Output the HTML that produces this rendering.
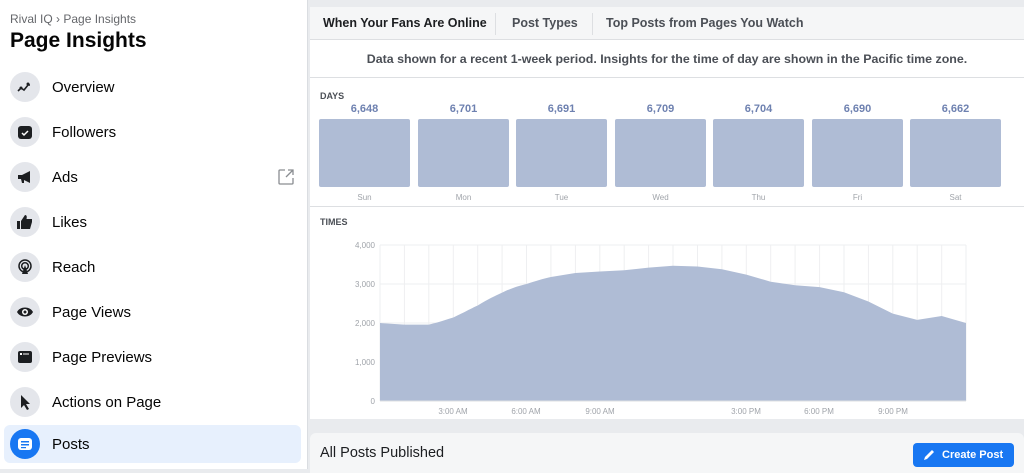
<!DOCTYPE html>
<html><head><meta charset="utf-8"><style>
*{margin:0;padding:0;box-sizing:border-box}
body{width:1024px;height:469px;overflow:hidden;font-family:"Liberation Sans",sans-serif;background:#e9ebee;position:relative}
.side{position:absolute;left:0;top:0;width:308px;height:469px;background:#fff;border-right:1px solid #dadde1}
.crumb{position:absolute;left:10px;top:12px;font-size:12px;color:#65676b}
.title{position:absolute;left:10px;top:29px;font-size:21px;font-weight:bold;color:#050505}
.item{position:absolute;left:4px;width:297px;height:38px;border-radius:6px}
.item .ic{position:absolute;left:6px;top:4px;width:30px;height:30px;border-radius:50%;background:#e4e6eb}
.item .ic svg{position:absolute;left:7px;top:7px}
.item span{position:absolute;left:48px;top:11px;font-size:15px;color:#050505}
.panel{position:absolute;left:310px;top:7px;width:714px;height:412px;background:#fff}
.tabs{height:33px;background:#f5f6f7;border-bottom:1px solid #dddfe2;font-size:12.5px;font-weight:bold;color:#4b4f56;position:relative}
.tabs span{position:absolute;top:9px}
.tabs i{position:absolute;top:6px;width:1px;height:22px;background:#dddfe2}
.desc{height:38px;border-bottom:1px solid #dddfe2;text-align:center;font-size:12.4px;font-weight:bold;color:#4b4f56;line-height:38px}
.lbl{position:absolute;font-size:9px;font-weight:bold;color:#4b4f56}
.bar{position:absolute;top:112px;width:91px;height:68px;background:#afbcd5;border-radius:2px}
.num{position:absolute;top:96px;width:91px;text-align:center;font-size:11px;font-weight:bold;color:#6e81b0}
.day{position:absolute;top:186px;width:91px;text-align:center;font-size:8px;color:#a0a4aa}
.card{position:absolute;left:310px;top:433px;width:714px;height:40px;background:#f5f6f7;border-radius:6px 6px 0 0}
.card .t{position:absolute;left:10px;top:12px;font-size:14.5px;color:#1c1e21}
.btn{position:absolute;left:603px;top:10px;width:101px;height:24px;background:#1877f2;border-radius:4px;color:#fff;font-size:11px;font-weight:bold;line-height:24px;padding-left:29px}
</style></head><body>
<div class="side">
<div class="crumb">Rival IQ › Page Insights</div>
<div class="title">Page Insights</div>
<div class="item" style="top:68px"><div class="ic"><svg width="16" height="16" viewBox="0 0 16 16"><path d="M1 12l3-3 3 2 4-5 2 0" stroke="#1c1e21" stroke-width="1.6" fill="none"/><circle cx="4" cy="9" r="1.5" fill="#1c1e21"/><circle cx="11" cy="5" r="1.5" fill="#1c1e21"/></svg></div><span>Overview</span></div>
<div class="item" style="top:113px"><div class="ic"><svg width="16" height="16" viewBox="0 0 16 16"><rect x="1" y="2" width="14" height="13" rx="3" fill="#1c1e21"/><path d="M5 9l2 2 4-4" stroke="#fff" stroke-width="1.5" fill="none"/></svg></div><span>Followers</span></div>
<div class="item" style="top:158px"><div class="ic"><svg width="16" height="16" viewBox="0 0 16 16"><path d="M1 6h4l8-4v12l-8-4H1zM4 10h3v4H5z" fill="#1c1e21"/></svg></div><span>Ads</span>
<svg style="position:absolute;left:273px;top:10px" width="18" height="18" viewBox="0 0 18 18"><path d="M8 2H3a1 1 0 0 0-1 1v12a1 1 0 0 0 1 1h12a1 1 0 0 0 1-1v-5M11 2h5v5M16 2l-7 7" stroke="#8a8d91" stroke-width="1.3" fill="none"/></svg></div>
<div class="item" style="top:203px"><div class="ic"><svg width="16" height="16" viewBox="0 0 16 16"><rect x="0" y="7" width="3" height="8" fill="#1c1e21"/><path d="M4 7l4-6c2 0 2 2 1.5 4H15v3l-2 7H4z" fill="#1c1e21"/></svg></div><span>Likes</span></div>
<div class="item" style="top:248px"><div class="ic"><svg width="16" height="16" viewBox="0 0 16 16"><circle cx="8" cy="7" r="6" stroke="#1c1e21" stroke-width="1.5" fill="none"/><circle cx="8" cy="7" r="3.3" stroke="#1c1e21" stroke-width="1.5" fill="none"/><path d="M8 6l3 9H5z" fill="#1c1e21"/></svg></div><span>Reach</span></div>
<div class="item" style="top:293px"><div class="ic"><svg width="16" height="16" viewBox="0 0 16 16"><path d="M0 8c3-6 13-6 16 0-3 6-13 6-16 0z" fill="#1c1e21"/><circle cx="8" cy="8" r="3" fill="#fff"/><circle cx="8" cy="8" r="1.5" fill="#1c1e21"/></svg></div><span>Page Views</span></div>
<div class="item" style="top:338px"><div class="ic"><svg width="16" height="16" viewBox="0 0 16 16"><rect x="1" y="2" width="14" height="12" rx="2" fill="#1c1e21"/><rect x="3" y="4" width="2" height="2" fill="#fff"/><rect x="6" y="4.5" width="6" height="1" fill="#fff"/></svg></div><span>Page Previews</span></div>
<div class="item" style="top:383px"><div class="ic"><svg width="16" height="16" viewBox="0 0 16 16"><path d="M4 1v13l3-3 3 5 2-1-3-5h4z" fill="#1c1e21"/></svg></div><span>Actions on Page</span></div>
<div class="item" style="top:425px;background:#e7f0fd"><div class="ic" style="background:#1877f2"><svg width="16" height="16" viewBox="0 0 16 16"><rect x="1" y="2" width="14" height="12" rx="3" fill="#fff"/><rect x="4" y="5" width="8" height="1.5" fill="#1877f2"/><rect x="4" y="8" width="8" height="1.5" fill="#1877f2"/><rect x="4" y="11" width="5" height="1.2" fill="#1877f2"/></svg></div><span>Posts</span></div>
</div>
<div class="panel">
<div class="tabs"><span style="left:13px;color:#1c1e21">When Your Fans Are Online</span><i style="left:185px"></i><span style="left:202px">Post Types</span><i style="left:282px"></i><span style="left:296px">Top Posts from Pages You Watch</span></div>
<div class="desc">Data shown for a recent 1-week period. Insights for the time of day are shown in the Pacific time zone.</div>
<div class="lbl" style="left:10px;top:84px">DAYS</div>
<div class="num" style="left:9px">6,648</div><div class="bar" style="left:9px"></div><div class="day" style="left:9px">Sun</div>
<div class="num" style="left:108px">6,701</div><div class="bar" style="left:108px"></div><div class="day" style="left:108px">Mon</div>
<div class="num" style="left:206px">6,691</div><div class="bar" style="left:206px"></div><div class="day" style="left:206px">Tue</div>
<div class="num" style="left:305px">6,709</div><div class="bar" style="left:305px"></div><div class="day" style="left:305px">Wed</div>
<div class="num" style="left:403px">6,704</div><div class="bar" style="left:403px"></div><div class="day" style="left:403px">Thu</div>
<div class="num" style="left:502px">6,690</div><div class="bar" style="left:502px"></div><div class="day" style="left:502px">Fri</div>
<div class="num" style="left:600px">6,662</div><div class="bar" style="left:600px"></div><div class="day" style="left:600px">Sat</div>
<div style="position:absolute;left:0;top:199px;width:714px;height:1px;background:#dddfe2"></div>
<div class="lbl" style="left:10px;top:210px">TIMES</div>
</div>
<svg style="position:absolute;left:0;top:0" width="1024" height="469" font-family="Liberation Sans, sans-serif">
<g stroke="#eeeff1" stroke-width="1">
<path d="M380 245H966M380 284H966M380 323H966M380 362H966"/>
<path d="M380 245V401M404.4 245V401M428.8 245V401M453.3 245V401M477.7 245V401M502.1 245V401M526.5 245V401M550.9 245V401M575.4 245V401M599.8 245V401M624.2 245V401M648.6 245V401M673 245V401M697.5 245V401M721.9 245V401M746.3 245V401M770.7 245V401M795.1 245V401M819.6 245V401M844 245V401M868.4 245V401M892.8 245V401M917.2 245V401M941.7 245V401M966 245V401"/>
</g>
<path d="M380 323L404.4 324.6L428.8 324.6C440 322 445 320 453.3 317.5C465 312 470 309 477.7 305.5C488 299 495 296 502.1 292.6C512 288 518 286 526.5 284C536 281 542 279 550.9 277L575.4 273L599.8 271.5L624.2 270.3L648.6 267.6L673 265.7L697.5 266.5L721.9 269.2L746.3 274.6L770.7 281.7L795.1 285.2L819.6 287.1L844 292.2L868.4 301.5L892.8 313.6L917.2 319.9L941.7 316L966 323V401H380Z" fill="#afbcd5"/>
<path d="M380 401H966" stroke="#dddfe2"/>
<g font-size="8" fill="#a0a4aa" text-anchor="end"><text x="375" y="248">4,000</text><text x="375" y="287">3,000</text><text x="375" y="326">2,000</text><text x="375" y="365">1,000</text><text x="375" y="404">0</text></g>
<g font-size="8" fill="#a0a4aa" text-anchor="middle"><text x="453" y="414">3:00 AM</text><text x="526" y="414">6:00 AM</text><text x="600" y="414">9:00 AM</text><text x="746" y="414">3:00 PM</text><text x="819" y="414">6:00 PM</text><text x="893" y="414">9:00 PM</text></g>
</svg>
<div class="card"><div class="t">All Posts Published</div><div class="btn"><svg style="position:absolute;left:9px;top:5px" width="14" height="14" viewBox="0 0 14 14"><path d="M2 12l1-3 7-7 2 2-7 7z" fill="#fff"/></svg>Create Post</div></div>
</body></html>
